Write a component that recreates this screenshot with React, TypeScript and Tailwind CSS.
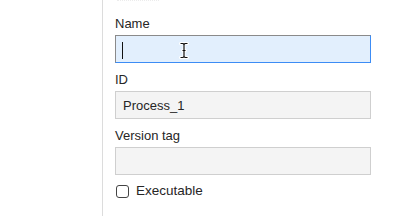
import { useState } from "react";

const font = { fontFamily: '"Liberation Sans", Arial, sans-serif' };

function IBeam() {
  return (
    <svg
      width="10"
      height="17"
      viewBox="0 0 10 17"
      className="pointer-events-none absolute left-[64px] top-[7px]"
    >
      <path
        d="M1.5 1.5h2.5l1 1 1-1h2.5M5 2.5v12M1.5 15.5h2.5l1-1 1 1h2.5M3.5 8.5h3"
        fill="none"
        stroke="#fff"
        strokeWidth="3"
        strokeLinecap="round"
      />
      <path
        d="M1.5 1.5h2.5l1 1 1-1h2.5M5 2.5v12M1.5 15.5h2.5l1-1 1 1h2.5M3.5 8.5h3"
        fill="none"
        stroke="#111"
        strokeWidth="1.2"
      />
    </svg>
  );
}

export default function App() {
  const [name, setName] = useState("");
  const [executable, setExecutable] = useState(false);

  return (
    <div className="flex h-[216px] w-[394px] bg-white text-[13px] text-[#262626]" style={font}>
      <div className="w-[102px] shrink-0" />
      <div className="relative flex-1 border-l border-[#dcdcdc] pl-[12px] pt-[16px]">
        <div className="absolute left-[14px] top-0 h-px w-[42px] border-t border-dotted border-[#ececec]" />

        <label className="block leading-[16px]">Name</label>
        <div className="relative mt-[3px] h-[28px] w-[256px]">
          <input
            value={name}
            onChange={(e) => setName(e.target.value)}
            className="h-full w-full border border-b-[#3c8cf5] border-l-[#8a8a8a] border-r-[#3c8cf5] border-t-[#8a8a8a] bg-[#e2effd] px-[7px] outline-none"
            style={font}
          />
          <span className="pointer-events-none absolute left-[7px] top-[7px] h-[17px] w-px bg-[#111]" />
          <IBeam />
        </div>

        <label className="mt-[9px] block leading-[16px]">ID</label>
        <input
          readOnly
          value="Process_1"
          className="mt-[3px] h-[28px] w-[256px] border border-[#cfcfcf] bg-[#f4f4f4] px-[7px] text-[#262626] outline-none"
          style={font}
        />

        <label className="mt-[9px] block leading-[16px]">Version tag</label>
        <input
          className="mt-[3px] h-[28px] w-[256px] border border-[#cfcfcf] bg-[#f4f4f4] px-[7px] outline-none"
          style={font}
        />

        <label className="mt-[8px] flex items-center gap-[7px] text-[13.5px] leading-[16px]">
          <input
            type="checkbox"
            checked={executable}
            onChange={(e) => setExecutable(e.target.checked)}
            className="ml-px h-[13px] w-[13px] appearance-none rounded-[3px] border border-[#444] bg-white checked:bg-[#3c8cf5]"
          />
          Executable
        </label>
      </div>
    </div>
  );
}
